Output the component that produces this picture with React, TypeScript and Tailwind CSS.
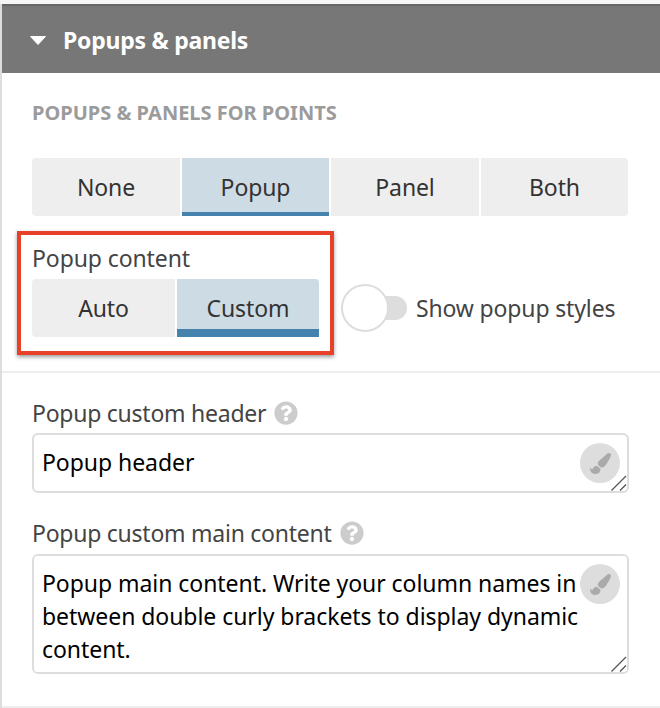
import { FaPaintBrush, FaQuestionCircle } from "react-icons/fa";

function Seg({ label, active, w, cls = "", bar = "h-1" }: { label: string; active?: boolean; w: string; cls?: string; bar?: string }) {
  return (
    <div className={`relative flex h-full items-center justify-center overflow-hidden ${w} ${cls} ${active ? "bg-[#cddbe4]" : "bg-[#eeeeee]"}`}>
      <span className="text-[23px] tracking-[-0.1px] text-[#333333]">{label}</span>
      {active && <div className={`absolute inset-x-0 bottom-0 ${bar} bg-[#4682ae]`} />}
    </div>
  );
}

function Brush({ top }: { top: string }) {
  return (
    <div className={`absolute right-[9px] ${top} flex h-10 w-10 items-center justify-center rounded-full bg-[#dddddd]`}>
      <FaPaintBrush className="text-[21px] text-[#aaaaaa]" />
    </div>
  );
}

function Handle() {
  return (
    <svg width="16" height="16" viewBox="0 0 16 16" className="pointer-events-none absolute bottom-[2px] right-[2px]">
      <path d="M0.5 15.5 L15 1 M9 15.5 L15 9.5" stroke="#555555" strokeWidth="1.3" fill="none" />
    </svg>
  );
}

function Label({ text }: { text: string }) {
  return (
    <div className="flex h-6 items-center gap-2 text-[23px] tracking-[-0.25px] text-[#444444]">
      <span>{text}</span>
      <FaQuestionCircle className="text-[24px] text-[#cccccc]" />
    </div>
  );
}

const fieldCls = "h-full w-full resize-none rounded-md border-2 border-[#dddddd] bg-white px-[8px] py-[11px] text-[23px] leading-[33px] tracking-[-0.05px] text-black outline-none";

export default function App() {
  return (
    <div className="relative h-[708px] w-[660px] overflow-hidden bg-white font-['Noto_Sans','Open_Sans',sans-serif]">
      <div className="h-1 bg-[#f6f6f6]" />
      <div className="flex h-[704px] flex-col border-l-2 border-[#dddddd]">
        <div className="flex h-[69px] shrink-0 items-center border-t-2 border-[#666666] bg-[#777777] pl-[28px] pt-[2px]">
          <svg width="16" height="9" viewBox="0 0 16 9" className="mr-[17px]">
            <path d="M0.5 0.5 H15.5 L8 8.5 Z" fill="#ffffff" stroke="#ffffff" strokeLinejoin="round" />
          </svg>
          <span className="text-[23px] font-bold tracking-[-0.25px] text-white">Popups &amp; panels</span>
        </div>
        <div className="shrink-0 pl-[30px] pt-[29px]">
          <div className="flex h-[22px] items-center text-[20px] font-bold text-[#9b9b9b]">POPUPS &amp; PANELS FOR POINTS</div>
          <div className="mt-[34px] flex h-[58px] w-[596px] gap-[2px]">
            <Seg label="None" w="w-[148px]" cls="rounded-l" />
            <Seg label="Popup" w="w-[147px]" active />
            <Seg label="Panel" w="w-[148px]" />
            <Seg label="Both" w="w-[147px]" cls="rounded-r" />
          </div>
          <div className="mt-[30px] flex h-6 items-center text-[23px] tracking-[-0.1px] text-[#444444]">Popup content</div>
          <div className="mt-[9px] flex h-[58px] items-center">
            <div className="flex h-full w-[287px] gap-[2px]">
              <Seg label="Auto" w="w-[143px]" cls="rounded-l" />
              <Seg label="Custom" w="w-[142px]" cls="rounded-tr" active bar="h-2" />
            </div>
            <div className="relative ml-[22px] h-6 w-[66px] rounded-full bg-[#dddddd]">
              <div className="absolute left-0 top-[-12px] h-12 w-12 rounded-full border-2 border-[#dddddd] bg-white" />
            </div>
            <span className="ml-[9px] text-[23px] tracking-[-0.15px] text-[#444444]">Show popup styles</span>
          </div>
        </div>
        <div className="mt-[34px] h-0.5 shrink-0 bg-[#eeeeee]" />
        <div className="shrink-0 pl-[30px] pt-[28px]">
          <Label text="Popup custom header" />
          <div className="relative mt-2 h-[60px] w-[597px]">
            <textarea defaultValue="Popup header" className={fieldCls} />
            <Brush top="top-[10px]" />
            <Handle />
          </div>
          <div className="mt-[28px]">
            <Label text="Popup custom main content" />
          </div>
          <div className="relative mt-[9px] h-[120px] w-[597px]">
            <textarea
              defaultValue="Popup main content. Write your column names in between double curly brackets to display dynamic content."
              className={fieldCls}
            />
            <Brush top="top-[10px]" />
            <Handle />
          </div>
        </div>
        <div className="mt-[32px] h-0.5 shrink-0 bg-[#eeeeee]" />
      </div>
      <div className="absolute left-[17px] top-[231px] h-[124px] w-[317px] border-4 border-[#e8412a] shadow-[0_2px_4px_rgba(0,0,0,0.4)]" />
    </div>
  );
}
